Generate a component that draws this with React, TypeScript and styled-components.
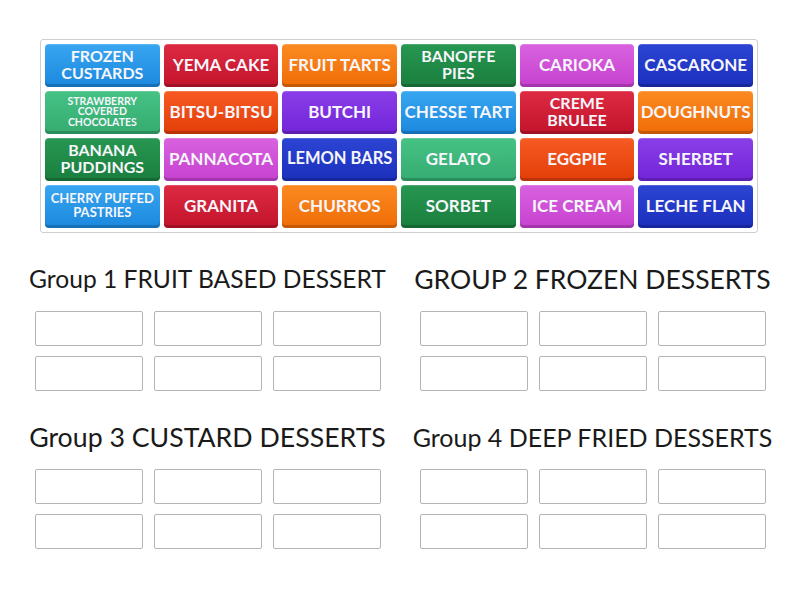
import React from "react";
import styled, { createGlobalStyle } from "styled-components";

const Global = createGlobalStyle`
  html, body { margin: 0; padding: 0; background: #ffffff; }
  body { font-family: Lato, "Open Sans", sans-serif; }
`;

const Page = styled.div`
  width: 800px;
  height: 600px;
  padding-top: 39px;
  box-sizing: border-box;
`;

const Panel = styled.div`
  margin-left: 40px;
  width: 718px;
  box-sizing: border-box;
  border: 1px solid #cfcfcf;
  border-radius: 3px;
  padding: 4px;
  display: grid;
  grid-template-columns: repeat(6, 1fr);
  grid-auto-rows: 43px;
  gap: 4px;
`;

const palette: [string, string][] = [
  ["#38a6f0", "#1b88de"],
  ["#dd2a42", "#c2142c"],
  ["#fb8a22", "#f06c05"],
  ["#279752", "#1a7e3d"],
  ["#d862df", "#c641cf"],
  ["#2b45d2", "#1c2fbd"],
  ["#46c285", "#35ab70"],
  ["#f75a22", "#e23d08"],
  ["#8a3ee8", "#7224d8"],
];

const Tile = styled.div<{ $c: number; $size: number }>`
  border-radius: 4px;
  background: linear-gradient(
    to bottom,
    ${(p) => palette[p.$c][0]} 0%,
    ${(p) => palette[p.$c][1]} 100%
  );
  box-shadow: inset 0 -3px 0 rgba(0, 0, 0, 0.18), inset 0 1px 0 rgba(255, 255, 255, 0.18);
  color: #f6f6fb;
  font-family: Lato, sans-serif;
  font-weight: 700;
  font-size: ${(p) => p.$size}px;
  line-height: ${(p) => (p.$size < 13 ? 1 : 1.05)};
  display: flex;
  align-items: center;
  justify-content: center;
  text-align: center;
  padding: 0 1px 2px;
  box-sizing: border-box;
  white-space: pre;
  overflow: hidden;
`;

const tiles: [string, number][] = [
  ["FROZEN\nCUSTARDS", 16],
  ["YEMA CAKE", 17],
  ["FRUIT TARTS", 17],
  ["BANOFFE\nPIES", 16],
  ["CARIOKA", 17],
  ["CASCARONE", 17],
  ["STRAWBERRY\nCOVERED\nCHOCOLATES", 10.5],
  ["BITSU-BITSU", 17],
  ["BUTCHI", 17],
  ["CHESSE TART", 17],
  ["CREME\nBRULEE", 16],
  ["DOUGHNUTS", 17],
  ["BANANA\nPUDDINGS", 16],
  ["PANNACOTA", 17],
  ["LEMON BARS", 16.5],
  ["GELATO", 17],
  ["EGGPIE", 17],
  ["SHERBET", 17],
  ["CHERRY PUFFED\nPASTRIES", 13],
  ["GRANITA", 17],
  ["CHURROS", 17],
  ["SORBET", 17],
  ["ICE CREAM", 17],
  ["LECHE FLAN", 17],
];

const Groups = styled.div`
  margin-top: 30px;
  margin-left: 15px;
  display: grid;
  grid-template-columns: 385px 385px;
  row-gap: 30px;
`;

const Group = styled.div`
  display: flex;
  flex-direction: column;
  align-items: center;
`;

const Heading = styled.div<{ $size: number }>`
  font-family: Lato, sans-serif;
  font-weight: 400;
  font-size: ${(p) => p.$size}px;
  height: 32px;
  line-height: 32px;
  color: #1a1a1a;
  white-space: nowrap;
`;

const Slots = styled.div`
  margin-top: 16px;
  display: grid;
  grid-template-columns: repeat(3, 108px);
  grid-auto-rows: 35px;
  column-gap: 11px;
  row-gap: 10px;
`;

const Slot = styled.div`
  border: 1px solid #b4b4b4;
  border-radius: 2px;
  background: #fff;
`;

const groups: [string, number][] = [
  ["Group 1 FRUIT BASED DESSERT", 24.6],
  ["GROUP 2 FROZEN DESSERTS", 26.5],
  ["Group 3 CUSTARD DESSERTS", 26.7],
  ["Group 4 DEEP FRIED DESSERTS", 25],
];

export default function App() {
  return (
    <Page>
      <Global />
      <Panel>
        {tiles.map(([t, s], i) => (
          <Tile key={i} $c={i % 9} $size={s}>
            {t}
          </Tile>
        ))}
      </Panel>
      <Groups>
        {groups.map(([g, s]) => (
          <Group key={g}>
            <Heading $size={s}>{g}</Heading>
            <Slots>
              {Array.from({ length: 6 }).map((_, i) => (
                <Slot key={i} />
              ))}
            </Slots>
          </Group>
        ))}
      </Groups>
    </Page>
  );
}
